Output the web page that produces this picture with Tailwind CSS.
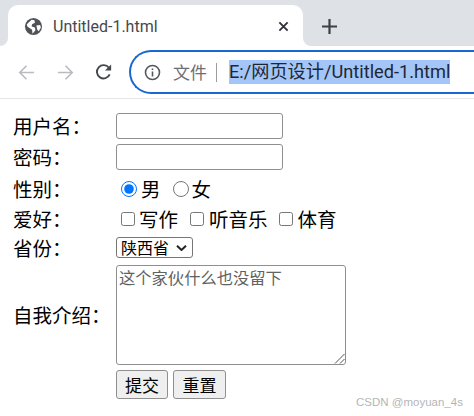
<!DOCTYPE html>
<html lang="zh-CN">
<head>
    <meta charset="UTF-8">
    <meta name="viewport" content="width=device-width, initial-scale=1.0">
    <title>Untitled-1.html</title>
    <script src="https://cdn.jsdelivr.net/npm/@tailwindcss/browser@4"></script>
</head>
<body class="relative h-[416px] w-[474px] overflow-hidden bg-white font-['Noto_Sans_CJK_SC',sans-serif] text-black">
    <!-- tab strip -->
    <div class="flex h-[46px] items-end bg-[#dee1e6] pl-2">
        <div class="relative flex h-[41px] w-[295px] items-center rounded-t-[10px] bg-white pl-[16px] pr-[14px] pt-[2px]">
            <div class="absolute bottom-0 left-[-8px] size-2 bg-white"><div class="size-2 rounded-br-lg bg-[#dee1e6]"></div></div>
            <div class="absolute bottom-0 right-[-8px] size-2 bg-white"><div class="size-2 rounded-bl-lg bg-[#dee1e6]"></div></div>
            <svg class="size-[19px] shrink-0" viewBox="0 0 20 20">
                <circle cx="10" cy="10" r="9" fill="#4f5358"/>
                <path d="M3 7.500 8 3l3 .5.5 2.500-3 1.500-.5 2.500 3.500 1 .5 3-3 3.500-.5-4L3.500 10zM13 9l4-.5.8 2.500-2.300 4-1.500-1.500z" fill="#fff"/>
            </svg>
            <span class="ml-[10px] font-['Roboto',sans-serif] text-[16px] text-[#45484d]">Untitled-1.html</span>
            <svg class="ml-auto size-[11px]" viewBox="0 0 12 12"><path d="M1.500 1.500l9 9M10.500 1.500l-9 9" stroke="#2f3237" stroke-width="2"/></svg>
        </div>
        <svg class="mb-[12px] ml-[19px] size-[15px]" viewBox="0 0 15 15"><path d="M7.500 0v15M0 7.500h15" stroke="#3c4043" stroke-width="2.200"/></svg>
    </div>
    <!-- toolbar -->
    <div class="flex h-[53px] items-center overflow-hidden border-b border-[#e4e5e7] pl-[18px]">
        <svg class="size-[17px] shrink-0" viewBox="0 0 19 19" fill="none" stroke="#b9bbbe" stroke-width="1.800"><path d="M18 9.500H2M9.500 2 2 9.500 9.500 17"/></svg>
        <svg class="ml-[22px] size-[17px] shrink-0" viewBox="0 0 19 19" fill="none" stroke="#b9bbbe" stroke-width="1.800"><path d="M1 9.500h16M9.500 2 17 9.500 9.500 17"/></svg>
        <svg class="ml-[21px] size-[18px] shrink-0" viewBox="0 0 19 19" fill="none"><path d="M15.500 12a7 7 0 1 1-.9-7" stroke="#45484d" stroke-width="2"/><path d="M17 1.500V8h-6.500z" fill="#45484d"/></svg>
        <div class="ml-[16px] flex h-[44px] w-[380px] shrink-0 items-center rounded-l-[22px] border-2 border-r-0 border-[#1a67d2] pl-[13px]">
            <svg class="size-[17px] shrink-0" viewBox="0 0 17 17" fill="none"><circle cx="8.500" cy="8.500" r="7" stroke="#55585c" stroke-width="1.600"/><path d="M8.500 7.500V12.500M8.500 4.500v1.600" stroke="#55585c" stroke-width="1.600"/></svg>
            <span class="ml-[12px] text-[17px] text-[#6c6f73]">文件</span>
            <span class="ml-[9px] h-[19px] w-px bg-[#9a9ca0]"></span>
            <span class="ml-[12px] flex h-[24px] items-center whitespace-nowrap bg-[#a3c5f7] font-['Roboto','Noto_Sans_CJK_SC',sans-serif] text-[18.200px] text-[#1d2733]">E:/网页设计/Untitled-1.html</span>
        </div>
    </div>
    <!-- form -->
    <form class="grid grid-cols-[103px_1fr] items-center pl-[13px] pt-[14px] text-[19.500px] leading-none">
        <label class="h-[26px] leading-[26px]">用户名：</label>
        <input type="text" class="h-[26px] w-[167px] rounded-[3px] border border-[#8f8f8f] bg-white">

        <label class="mt-[5px] h-[26px] leading-[26px]">密码：</label>
        <input type="password" class="mt-[5px] h-[26px] w-[167px] rounded-[3px] border border-[#8f8f8f] bg-white">

        <label class="mt-[4px] h-[29px] leading-[29px]">性别：</label>
        <div class="mt-[4px] flex h-[29px] items-center pl-[5px]">
            <input type="radio" name="sex" checked class="m-0 size-[16px]">
            <span class="ml-[4px]">男</span>
            <input type="radio" name="sex" class="m-0 ml-[12px] size-[16px]">
            <span class="ml-[3px]">女</span>
        </div>

        <label class="mt-px h-[29px] leading-[29px]">爱好：</label>
        <div class="mt-px flex h-[29px] items-center pl-[5px]">
            <input type="checkbox" class="m-0 size-[14px]">
            <span class="ml-[4px]">写作</span>
            <input type="checkbox" class="m-0 ml-[12px] size-[14px]">
            <span class="ml-[5px]">听音乐</span>
            <input type="checkbox" class="m-0 ml-[11px] size-[14px]">
            <span class="ml-[5px]">体育</span>
        </div>

        <label class="mt-[4px] h-[21px] leading-[21px]">省份：</label>
        <div class="relative mt-[4px] h-[21px] w-[77px]">
            <select class="block size-full appearance-none rounded-[3px] border border-[#767676] bg-white py-0 pl-[4px] text-[16px] leading-[19px]">
                <option>陕西省</option>
            </select>
            <svg class="pointer-events-none absolute right-[6px] top-[8px] h-[6px] w-[11px]" viewBox="0 0 11 6" fill="none" stroke="#222" stroke-width="2"><path d="M1 .8 5.500 5 10 .8"/></svg>
        </div>

        <label class="mt-[7px]">自我介绍：</label>
        <div class="relative mt-[7px] h-[100px] w-[230px]">
            <textarea class="block size-full resize-none rounded-[3px] border border-[#8f8f8f] bg-white px-[2px] py-0 text-[16.300px] leading-[22px] text-[#5f6364]">这个家伙什么也没留下</textarea>
            <svg class="absolute bottom-[1px] right-[1px] size-[11px]" viewBox="0 0 11 11" fill="none" stroke="#555"><path d="M1 10.500 10.500 1M6 10.500l4.500-4.500"/></svg>
        </div>

        <div></div>
        <div class="mt-[5px] flex gap-[5px]">
            <button type="button" class="h-[29px] w-[52px] rounded-[3px] border border-[#8f8f8f] bg-[#efefef] text-[17px]">提交</button>
            <button type="button" class="h-[29px] w-[53px] rounded-[3px] border border-[#8f8f8f] bg-[#efefef] text-[17px]">重置</button>
        </div>
    </form>
    <!-- watermark -->
    <span class="absolute left-[356px] top-[395px] font-['Liberation_Sans',sans-serif] text-[11.500px] leading-[14px] text-[#b5b5b5]">CSDN @moyuan_4s</span>
</body>
</html>
